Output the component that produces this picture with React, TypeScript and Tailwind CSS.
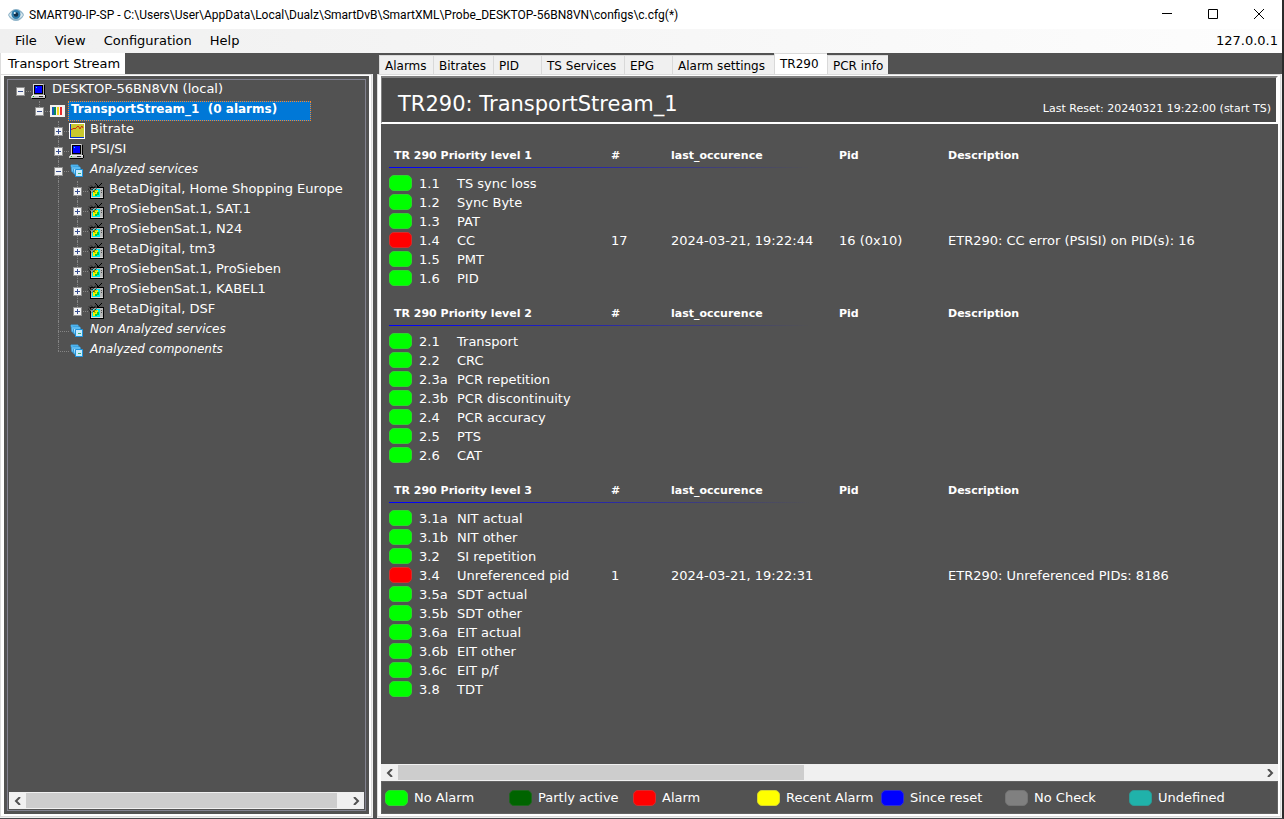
import { useState } from "react";
import type { ReactNode } from "react";

type Status = "ok" | "partly" | "alarm" | "recent" | "since" | "nocheck" | "undefined";

interface Check {
  code: string;
  name: string;
  status?: Status;
  count?: string;
  last?: string;
  pid?: string;
  description?: string;
}

interface TreeNode {
  label: string;
  icon: "computer" | "stream" | "chart" | "stack" | "tv";
  italic?: boolean;
  selected?: boolean;
  toggle?: "+" | "-";
  children?: TreeNode[];
}

// Swatch colors per alarm state
const statusColors: Record<Status, string> = {
  ok: "bg-[#00ff00] border-[#2cd62c]",
  partly: "bg-[#006400] border-[#1e661e]",
  alarm: "bg-[#ff0000] border-[#d62c2c]",
  recent: "bg-[#ffff00] border-[#d6d62c]",
  since: "bg-[#0000ff] border-[#2c2cd6]",
  nocheck: "bg-[#808080] border-[#747474]",
  undefined: "bg-[#20b2aa] border-[#2c9a95]",
};

const legend: { status: Status; label: string }[] = [
  { status: "ok", label: "No Alarm" },
  { status: "partly", label: "Partly active" },
  { status: "alarm", label: "Alarm" },
  { status: "recent", label: "Recent Alarm" },
  { status: "since", label: "Since reset" },
  { status: "nocheck", label: "No Check" },
  { status: "undefined", label: "Undefined" },
];

const tabs = [
  { label: "Alarms", width: "w-[54px]" },
  { label: "Bitrates", width: "w-[60px]" },
  { label: "PID", width: "w-[48px]" },
  { label: "TS Services", width: "w-[83px]" },
  { label: "EPG", width: "w-[48px]" },
  { label: "Alarm settings", width: "w-[102px]" },
  { label: "TR290", width: "w-[53px]" },
  { label: "PCR info", width: "w-[61px]" },
];

const levels: { title: string; checks: Check[] }[] = [
  {
    title: "TR 290 Priority level 1",
    checks: [
      { code: "1.1", name: "TS sync loss" },
      { code: "1.2", name: "Sync Byte" },
      { code: "1.3", name: "PAT" },
      {
        code: "1.4",
        name: "CC",
        status: "alarm",
        count: "17",
        last: "2024-03-21, 19:22:44",
        pid: "16 (0x10)",
        description: "ETR290: CC error (PSISI) on PID(s): 16",
      },
      { code: "1.5", name: "PMT" },
      { code: "1.6", name: "PID" },
    ],
  },
  {
    title: "TR 290 Priority level 2",
    checks: [
      { code: "2.1", name: "Transport" },
      { code: "2.2", name: "CRC" },
      { code: "2.3a", name: "PCR repetition" },
      { code: "2.3b", name: "PCR discontinuity" },
      { code: "2.4", name: "PCR accuracy" },
      { code: "2.5", name: "PTS" },
      { code: "2.6", name: "CAT" },
    ],
  },
  {
    title: "TR 290 Priority level 3",
    checks: [
      { code: "3.1a", name: "NIT actual" },
      { code: "3.1b", name: "NIT other" },
      { code: "3.2", name: "SI repetition" },
      {
        code: "3.4",
        name: "Unreferenced pid",
        status: "alarm",
        count: "1",
        last: "2024-03-21, 19:22:31",
        description: "ETR290: Unreferenced PIDs: 8186",
      },
      { code: "3.5a", name: "SDT actual" },
      { code: "3.5b", name: "SDT other" },
      { code: "3.6a", name: "EIT actual" },
      { code: "3.6b", name: "EIT other" },
      { code: "3.6c", name: "EIT p/f" },
      { code: "3.8", name: "TDT" },
    ],
  },
];

const services = [
  "BetaDigital, Home Shopping Europe",
  "ProSiebenSat.1, SAT.1",
  "ProSiebenSat.1, N24",
  "BetaDigital, tm3",
  "ProSiebenSat.1, ProSieben",
  "ProSiebenSat.1, KABEL1",
  "BetaDigital, DSF",
];

const tree: TreeNode[] = [
  {
    label: "DESKTOP-56BN8VN (local)",
    icon: "computer",
    toggle: "-",
    children: [
      {
        label: "TransportStream_1  (0 alarms)",
        icon: "stream",
        toggle: "-",
        selected: true,
        children: [
          { label: "Bitrate", icon: "chart", toggle: "+" },
          { label: "PSI/SI", icon: "computer", toggle: "+" },
          {
            label: "Analyzed services",
            icon: "stack",
            italic: true,
            toggle: "-",
            children: services.map((label) => ({ label, icon: "tv" as const, toggle: "+" as const })),
          },
          { label: "Non Analyzed services", icon: "stack", italic: true },
          { label: "Analyzed components", icon: "stack", italic: true },
        ],
      },
    ],
  },
];

function TreeIcon({ name }: { name: TreeNode["icon"] }) {
  return (
    <svg viewBox="0 0 16 16" className="w-4 h-4 shrink-0" shapeRendering="crispEdges" aria-hidden="true">
      {name === "computer" && (
        <>
          <path d="M2 1h11v11H2z" fill="#d8d8d8" />
          <path d="M3 2h9v9H3z" fill="#000" />
          <path d="M4 3h7v7H4z" fill="#0000ff" />
          <path d="M5 4h1v1H5z" fill="#00ffff" />
          <path d="M12 1h1v11h-1z" fill="#a8a8a8" />
          <path d="M13 2h1v10h-1z" fill="#000" />
          <path d="M3 11h9v1H3z" fill="#909090" />
          <path d="M1 12h13v3H0v-2h1z" fill="#c6c6c6" />
          <path d="M1 12h13v1H1z" fill="#efefef" />
          <path d="M8 13h4v1H8z" fill="#333" />
          <path d="M2 13h1v1H2z" fill="#00c000" />
          <path d="M14 12h1v3h-1v1H1v-1h13z" fill="#000" />
        </>
      )}
      {name === "stream" && (
        <>
          <path d="M0 2h15v12H0z" fill="#f5f1ee" />
          <path d="M2 4h2v8H2z" fill="#1c5bb8" />
          <path d="M4 4h2v8H4z" fill="#0c8a55" />
          <path d="M7 4h2v8H7z" fill="#f4d51c" />
          <path d="M10 4h2v8h-2z" fill="#e8292b" />
        </>
      )}
      {name === "chart" && (
        <>
          <path d="M0 0h16v16H0z" fill="#fff" />
          <path d="M1 1h14v13H1z" fill="#c8c82e" />
          <path d="M1 1h1v14H1zM1 14h14v1H1z" fill="#0033cc" />
          <path
            d="M2 7l1-1h1l1-1 1 1 1-1 1-1 1-1 1 1 1 2 1-2 1-1 1 2"
            fill="none"
            stroke="#d03010"
            shapeRendering="auto"
          />
        </>
      )}
      {name === "stack" && (
        <g shapeRendering="auto">
          <path d="M2 2h7l1 7H3z" fill="#8fcdf3" stroke="#3aa0de" />
          <path d="M2 2h7v2H2z" fill="#4fb4ee" />
          <path d="M4 4h7l1 7H5z" fill="#a9dbf8" stroke="#2d98da" />
          <path d="M4 4h7v2H4z" fill="#5cbaf0" />
          <path d="M6.500 6.500h7v7h-7z" fill="#c6ebff" stroke="#1f94dc" />
          <path d="M9 10h3v1H9z" fill="#3fb06a" />
        </g>
      )}
      {name === "tv" && (
        <>
          <path d="M2 4h14v12H2z" fill="#000" />
          <path d="M3 5h12v10H3z" fill="#b8b8b8" />
          <path d="M3 14h12v1H3z" fill="#d8d8d8" />
          <path d="M4 6h8v8H4z" fill="#00e8f0" />
          <path d="M5 7h5v2H9v2H7v2H5z" fill="#f5f500" />
          <path d="M7 11h2V9h2v3H9v1H7z" fill="#00d040" />
          <path d="M13 7h1v1h-1zM13 9h1v1h-1z" fill="#555" />
          <path d="M7 0h1v1H7zM8 1h1v1H8zM9 2h1v2H9zM10 3h1v1h-1zM11 2h1v1h-1zM12 1h1v1h-1zM13 0h1v1h-1z" fill="#000" />
          <path d="M1 3.500l6 6M3 2.500l5 5M0 5.500l3 3M2 8.500l6-6M4 9.500l5-5" fill="none" stroke="#111" shapeRendering="auto" />
          <path d="M2 6.500l2 2 4-4" fill="none" stroke="#d8d8d8" shapeRendering="auto" />
        </>
      )}
    </svg>
  );
}

function Toggle({ sign, label }: { sign: "+" | "-"; label: string }) {
  return (
    <button
      aria-label={`${sign === "+" ? "Expand" : "Collapse"} ${label}`}
      className="relative w-[9px] h-[9px] bg-[#f4f4f4] border border-[#919191]"
    >
      <span className="absolute left-px top-[3px] w-[5px] h-px bg-[#3a4f8f]" />
      {sign === "+" && <span className="absolute left-[3px] top-px w-px h-[5px] bg-[#3a4f8f]" />}
    </button>
  );
}

// guides: one flag per ancestor level, true when its vertical line runs through this row
function TreeRows({ nodes, guides }: { nodes: TreeNode[]; guides: boolean[] }) {
  return (
    <ul>
      {nodes.map((node, i) => {
        const last = i === nodes.length - 1;
        return (
          <li key={node.label}>
            <div className="flex h-5">
              {guides.map((on, g) => (
                <span key={g} className="w-[19px] shrink-0 pl-[9px]">
                  {on && <span className="block h-5 w-px border-l border-dotted border-[#858585]" />}
                </span>
              ))}
              <span className="relative w-5 shrink-0">
                {guides.length > 0 && (
                  <span
                    className={`absolute left-[9px] top-0 border-l border-dotted border-[#858585] ${last ? "h-[10px]" : "h-5"}`}
                  />
                )}
                <span className="absolute left-[9px] top-[10px] w-[11px] border-t border-dotted border-[#858585]" />
                {node.toggle && (
                  <span className="absolute left-[5px] top-[6px] flex">
                    <Toggle sign={node.toggle} label={node.label} />
                  </span>
                )}
              </span>
              <span className="pt-[2px] shrink-0">
                <TreeIcon name={node.icon} />
              </span>
              <span
                className={`ml-[2px] pl-[3px] whitespace-pre leading-4 ${
                  node.selected
                    ? "w-[243px] bg-[#0078d7] font-bold text-[12px] outline-1 -outline-offset-1 outline-dotted outline-[#ff8728]"
                    : node.italic
                      ? "italic text-[12px]"
                      : "text-[13px]"
                }`}
              >
                {node.label}
              </span>
            </div>
            {node.children && (
              <TreeRows nodes={node.children} guides={guides.length ? [...guides, !last] : [false]} />
            )}
          </li>
        );
      })}
    </ul>
  );
}

function Swatch({ status }: { status: Status }) {
  return <span className={`block w-[23px] h-4 shrink-0 rounded-[5px] border ${statusColors[status]}`} />;
}

function ScrollBar({ thumb }: { thumb: string }) {
  return (
    <div className="flex h-[17px] shrink-0 bg-[#f0f0f0] text-[#505050]">
      <button aria-label="Scroll left" className="w-[17px] flex items-center justify-center">
        <svg viewBox="0 0 8 8" className="w-2 h-2" aria-hidden="true">
          <path d="M6 0L2 4l4 4" fill="none" stroke="currentColor" strokeWidth="2" />
        </svg>
      </button>
      <div className="flex-1 py-px">
        <div className={`h-full bg-[#cdcdcd] ${thumb}`} />
      </div>
      <button aria-label="Scroll right" className="w-[17px] flex items-center justify-center">
        <svg viewBox="0 0 8 8" className="w-2 h-2" aria-hidden="true">
          <path d="M2 0l4 4-4 4" fill="none" stroke="currentColor" strokeWidth="2" />
        </svg>
      </button>
    </div>
  );
}

// White bevelled frame round each tab page
function Panel({ children }: { children: ReactNode }) {
  return (
    <div className="flex-1 min-h-0 flex flex-col bg-[#f0f0f0] pr-px pb-px">
      <div className="flex-1 min-h-0 flex flex-col bg-white border border-[#dcdcdc] pl-[3px] pr-[2px] pt-px pb-[2px]">
        {children}
      </div>
    </div>
  );
}

function LevelTable({ title, checks }: { title: string; checks: Check[] }) {
  return (
    <table className="w-full table-fixed border-collapse text-left text-[13px] leading-[19px] whitespace-nowrap">
      <colgroup>
        <col className="w-[30px]" />
        <col className="w-[38px]" />
        <col className="w-[154px]" />
        <col className="w-[60px]" />
        <col className="w-[168px]" />
        <col className="w-[109px]" />
        <col />
      </colgroup>
      <thead>
        <tr className="h-6 text-[11px]">
          <th colSpan={3} className="pl-[5px]">{title}</th>
          <th>#</th>
          <th>last_occurence</th>
          <th>Pid</th>
          <th>Description</th>
        </tr>
        <tr aria-hidden="true">
          <td colSpan={7} className="pb-[6px]">
            <div className="w-[421px] h-px bg-linear-to-r/srgb from-[#0000ff] to-[#525252]" />
          </td>
        </tr>
      </thead>
      <tbody>
        {checks.map((c) => (
          <tr key={c.code} className="h-[19px]">
            <td className="align-top pt-px">
              <Swatch status={c.status ?? "ok"} />
            </td>
            <td>{c.code}</td>
            <td>{c.name}</td>
            <td>{c.count}</td>
            <td>{c.last}</td>
            <td>{c.pid}</td>
            <td>{c.description}</td>
          </tr>
        ))}
      </tbody>
    </table>
  );
}

export default function App() {
  const [activeTab, setActiveTab] = useState("TR290");

  return (
    <div className="h-screen flex flex-col overflow-hidden bg-[#525252] border-r-2 border-b border-r-[#2b2b2b] border-b-[#4a4a4f] font-['Verdana','DejaVu_Sans',sans-serif] text-[13px] text-black">
      {/* Title bar */}
      <header className="h-[29px] shrink-0 flex items-center bg-white pl-2">
        <svg viewBox="0 0 16 12" className="w-4 h-3 shrink-0" aria-hidden="true">
          <path d="M0 6C3 1 6 0 8 0s6 1 8 6c-2 4-5 6-8 6S2 10 0 6z" fill="#8fb4c9" />
          <path d="M1 6c2-3 5-4 7-4s5 1 7 4c-2 3-5 4-7 4S3 9 1 6z" fill="#dbe8ee" />
          <circle cx="8" cy="5.5" r="4.5" fill="#2f7fae" />
          <circle cx="8" cy="5.5" r="2.3" fill="#12304a" />
          <circle cx="6.8" cy="4" r="1" fill="#e8f6ff" />
        </svg>
        <h1 className="ml-[5px] flex-1 truncate font-['Segoe_UI','Roboto',sans-serif] text-[12px]">
          SMART90-IP-SP - C:\Users\User\AppData\Local\Dualz\SmartDvB\SmartXML\Probe_DESKTOP-56BN8VN\configs\c.cfg(*)
        </h1>
        <div className="flex h-full pb-[2px]">
          <button aria-label="Minimize" className="w-[46px] flex items-center justify-center">
            <svg viewBox="0 0 10 10" className="w-[10px] h-[10px]" aria-hidden="true">
              <path d="M0 4.5h10" stroke="#000" />
            </svg>
          </button>
          <button aria-label="Maximize" className="w-[46px] flex items-center justify-center">
            <svg viewBox="0 0 10 10" className="w-[10px] h-[10px]" aria-hidden="true">
              <path d="M.5.5h9v9h-9z" fill="none" stroke="#000" />
            </svg>
          </button>
          <button aria-label="Close" className="w-[46px] flex items-center justify-center">
            <svg viewBox="0 0 10 10" className="w-[10px] h-[10px]" aria-hidden="true">
              <path d="M0 0l10 10M10 0L0 10" stroke="#000" />
            </svg>
          </button>
        </div>
      </header>

      {/* Menu */}
      <nav className="h-6 shrink-0 flex items-center gap-[18px] pl-[15px] pr-1 bg-linear-to-r from-[#f0f0f0] to-[#fdfdfd]">
        <button>File</button>
        <button>View</button>
        <button>Configuration</button>
        <button>Help</button>
        <span className="ml-auto">127.0.0.1</span>
      </nav>

      <main className="flex-1 min-h-0 flex gap-1">
        {/* Stream tree */}
        <section className="w-[373px] shrink-0 flex flex-col">
          <div className="h-[21px] shrink-0 flex">
            <button className="w-[125px] bg-white border-l border-[#dcdcdc] pl-[7px] text-left leading-[21px]">
              Transport Stream
            </button>
          </div>
          <Panel>
            <div className="flex-1 min-h-0 flex bg-[#525252] p-[3px]">
              <div className="flex-1 min-w-0 flex flex-col border border-[#828290] p-px text-white">
                <div className="flex-1 min-h-0 overflow-hidden pl-[2px]">
                  <TreeRows nodes={tree} guides={[]} />
                </div>
                <ScrollBar thumb="w-[97%]" />
              </div>
            </div>
          </Panel>
        </section>

        {/* Probe pages */}
        <section className="flex-1 min-w-0 flex flex-col">
          <div role="tablist" className="h-[21px] shrink-0 flex items-end pl-[2px] text-[12px]">
            {tabs.map((tab) => (
              <button
                key={tab.label}
                role="tab"
                aria-selected={tab.label === activeTab}
                onClick={() => setActiveTab(tab.label)}
                className={`${tab.width} pl-[5px] text-left whitespace-nowrap border-l border-t border-[#d9d9d9] ${
                  tab.label === activeTab ? "h-[21px] bg-white" : "h-[19px] pt-px bg-[#f0f0f0]"
                }`}
              >
                {tab.label}
              </button>
            ))}
          </div>
          <Panel>
            <div className="h-[48px] shrink-0 flex items-end justify-between bg-[#4a4a4a] border-t-2 border-l border-t-[#808080] border-l-[#808080] border-b-2 border-r-2 border-b-white border-r-white pl-4 pr-[5px] text-white">
              <h2 className="text-[21px] leading-9">TR290: TransportStream_1</h2>
              <p className="text-[11px] leading-[26px]">Last Reset: 20240321 19:22:00 (start TS)</p>
            </div>
            <div className="flex-1 min-h-0 overflow-hidden flex flex-col gap-[13px] bg-[#525252] pt-[19px] pl-2 text-white">
              {levels.map((level) => (
                <LevelTable key={level.title} title={level.title} checks={level.checks} />
              ))}
            </div>
            <ScrollBar thumb="w-[47%]" />
            <ul className="h-[33px] shrink-0 flex items-center bg-[#525252] border border-[#636363] pl-[3px] pt-px text-white">
              {legend.map((item) => (
                <li key={item.label} className="w-[124px] flex items-center gap-[6px] whitespace-nowrap">
                  <Swatch status={item.status} />
                  {item.label}
                </li>
              ))}
            </ul>
          </Panel>
        </section>
      </main>
    </div>
  );
}
